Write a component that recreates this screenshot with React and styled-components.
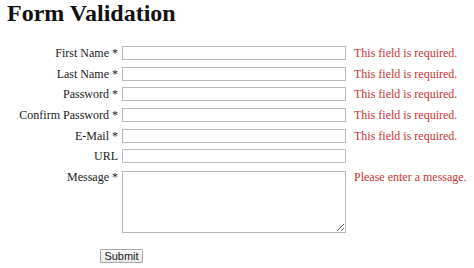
import React from 'react';
import styled, { createGlobalStyle } from 'styled-components';

const GlobalStyle = createGlobalStyle`
  html, body {
    margin: 0;
    padding: 0;
    background: #fff;
  }
  body {
    font-family: "Liberation Serif", "Times New Roman", serif;
    color: #222;
  }
`;

const Page = styled.div`
  width: 474px;
  height: 268px;
  padding: 0 7px;
  box-sizing: border-box;
  overflow: hidden;
`;

const Title = styled.h1`
  margin: 0 0 19px;
  font-size: 24px;
  font-weight: bold;
  line-height: normal;
  color: #111;
`;

const Form = styled.form`
  display: grid;
  grid-template-columns: 111px 224px auto;
  column-gap: 4px;
  row-gap: 6.7px;
  align-items: center;
`;

const Label = styled.label`
  text-align: right;
  font-size: 12px;
  line-height: 14px;
  white-space: nowrap;
  align-self: ${(p) => (p.$top ? 'start' : 'center')};
`;

const Input = styled.input`
  box-sizing: border-box;
  width: 224px;
  height: 14px;
  margin: 0;
  padding: 0 2px;
  border: 1px solid #b9b9b9;
  background: #fff;
`;

const TextArea = styled.textarea`
  box-sizing: border-box;
  width: 224px;
  height: 62px;
  margin: 1px 0 0;
  padding: 2px;
  border: 1px solid #b9b9b9;
  resize: both;
  font-family: inherit;
  display: block;
`;

const Error = styled.span`
  margin-left: 4px;
  font-size: 12px;
  line-height: 14px;
  color: #cc3333;
  white-space: nowrap;
  align-self: ${(p) => (p.$top ? 'start' : 'center')};
`;

const Actions = styled.div`
  padding: 13px 0 0 93px;
`;

const Button = styled.button`
  box-sizing: border-box;
  width: 43px;
  height: 14px;
  padding: 0;
  font-family: "Liberation Sans", Arial, sans-serif;
  font-size: 11px;
  line-height: 12px;
  color: #222;
  background: linear-gradient(#fafafa, #e8e8e8);
  border: 1px solid #a9a9a9;
  border-radius: 1px;
`;

const fields = [
  { label: 'First Name *', error: 'This field is required.' },
  { label: 'Last Name *', error: 'This field is required.' },
  { label: 'Password *', error: 'This field is required.', type: 'password' },
  { label: 'Confirm Password *', error: 'This field is required.', type: 'password' },
  { label: 'E-Mail *', error: 'This field is required.' },
  { label: 'URL', error: '' },
];

export default function App() {
  return (
    <Page>
      <GlobalStyle />
      <Title>Form Validation</Title>
      <Form onSubmit={(e) => e.preventDefault()}>
        {fields.map((f) => (
          <React.Fragment key={f.label}>
            <Label>{f.label}</Label>
            <Input type={f.type || 'text'} />
            <Error>{f.error}</Error>
          </React.Fragment>
        ))}
        <Label $top>Message *</Label>
        <TextArea />
        <Error $top>Please enter a message.</Error>
      </Form>
      <Actions>
        <Button type="button">Submit</Button>
      </Actions>
    </Page>
  );
}
